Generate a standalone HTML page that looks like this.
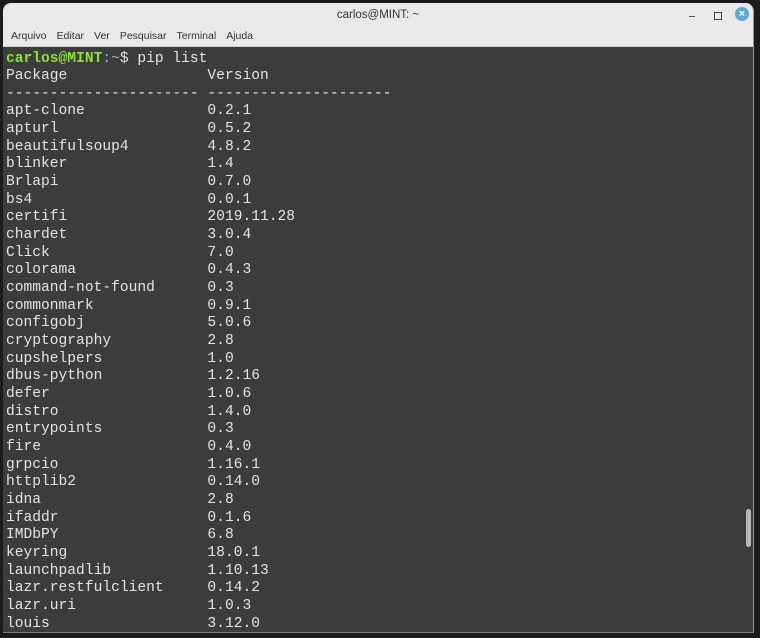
<!DOCTYPE html>
<html><head><meta charset="utf-8"><style>
html,body{margin:0;padding:0;width:760px;height:638px;background:#1c1c1c;overflow:hidden}
.win{position:absolute;left:3px;top:3px;width:751px;height:630px;background:#3c3c3c;border-radius:8px 8px 0 0;overflow:hidden;border-right:1px solid #9a9a9a;border-bottom:1px solid #7a7a7a;box-sizing:border-box}
.tb{position:absolute;left:0;top:0;width:100%;height:43px;background:#e9e9e9;border-bottom:1px solid #cfcfcf;font-family:"Liberation Sans",sans-serif;color:#333}
.title{position:absolute;top:6px;left:0;width:100%;text-align:center;font-size:11.5px}
.menu{position:absolute;top:27px;left:8px;font-size:10.5px}
.menu span{margin-right:10px}
.term{position:absolute;left:3px;top:47.5px;font-family:"Liberation Mono",monospace;font-size:14.6px;line-height:17.66px;color:#e4e4e4;white-space:pre}
.g{color:#8ae234;font-weight:bold}
.b{color:#8fb4d8}
.sb{position:absolute;left:743px;top:506px;width:5px;height:38px;background:#b8b8b8;border-radius:3px}
</style></head><body>
<div class="win">
<div class="tb">
<div class="title">carlos@MINT: ~</div>
<div class="menu"><span>Arquivo</span><span>Editar</span><span>Ver</span><span>Pesquisar</span><span>Terminal</span><span>Ajuda</span></div>
<div style="position:absolute;left:686px;top:13px;width:6px;height:1px;background:#555"></div>
<div style="position:absolute;left:711px;top:9px;width:6px;height:6px;border:1px solid #444"></div>
<div style="position:absolute;left:732px;top:4px;width:14px;height:14px;border-radius:50%;background:#5aa9d6;color:#fff;font-size:11px;line-height:14px;text-align:center;font-weight:bold">×</div>
</div>
<div class="term"><span class="g">carlos@MINT</span><span class="b">:~</span>$ pip list
Package                Version
---------------------- ---------------------
apt-clone              0.2.1
apturl                 0.5.2
beautifulsoup4         4.8.2
blinker                1.4
Brlapi                 0.7.0
bs4                    0.0.1
certifi                2019.11.28
chardet                3.0.4
Click                  7.0
colorama               0.4.3
command-not-found      0.3
commonmark             0.9.1
configobj              5.0.6
cryptography           2.8
cupshelpers            1.0
dbus-python            1.2.16
defer                  1.0.6
distro                 1.4.0
entrypoints            0.3
fire                   0.4.0
grpcio                 1.16.1
httplib2               0.14.0
idna                   2.8
ifaddr                 0.1.6
IMDbPY                 6.8
keyring                18.0.1
launchpadlib           1.10.13
lazr.restfulclient     0.14.2
lazr.uri               1.0.3
louis                  3.12.0</div>
<div class="sb"></div>
</div>
</body></html>
